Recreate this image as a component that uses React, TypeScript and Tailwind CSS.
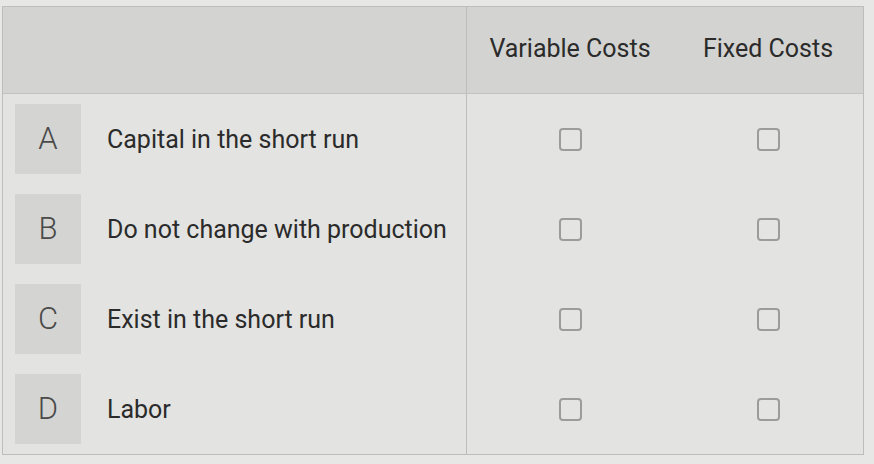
import React from "react";

const rows = [
  { letter: "A", label: "Capital in the short run" },
  { letter: "B", label: "Do not change with production" },
  { letter: "C", label: "Exist in the short run" },
  { letter: "D", label: "Labor" },
];

const Box: React.FC = () => (
  <div className="w-[23px] h-[23px] rounded-[4px] border-2 border-[#9c9c9a] bg-[#e4e4e2]" />
);

const App: React.FC = () => {
  return (
    <div
      className="w-[874px] h-[464px] bg-[#e7e7e5] pt-[6px] pl-[2px]"
      style={{ fontFamily: "Roboto, 'Liberation Sans', sans-serif" }}
    >
      <div className="w-[862px] h-[449px] border border-[#bdbdbb] bg-[#e3e3e1] flex flex-col">
        {/* header */}
        <div className="flex h-[87px] bg-[#d3d3d1] border-b border-[#c2c2c0]">
          <div className="w-[464px] border-r border-[#bdbdbb]" />
          <div className="w-[206px] flex items-center justify-center pb-[2px] text-[25px] text-[#2b2b2b]">
            Variable Costs
          </div>
          <div className="flex-1 flex items-center justify-center pb-[2px] text-[25px] text-[#2b2b2b]">
            Fixed Costs
          </div>
        </div>

        {/* body */}
        <div className="flex flex-1">
          <div className="w-[464px] border-r border-[#bdbdbb] flex flex-col">
            {rows.map((r) => (
              <div key={r.letter} className="h-[90px] flex items-center pl-[12px]">
                <div className="w-[66px] h-[70px] bg-[#d4d4d2] flex items-center justify-center text-[31px] font-light text-[#4a4a4a]">
                  {r.letter}
                </div>
                <span className="ml-[26px] pt-[2px] text-[25px] text-[#2b2b2b]">{r.label}</span>
              </div>
            ))}
          </div>
          <div className="w-[206px] flex flex-col">
            {rows.map((r) => (
              <div key={r.letter} className="h-[90px] flex items-center justify-center">
                <Box />
              </div>
            ))}
          </div>
          <div className="flex-1 flex flex-col">
            {rows.map((r) => (
              <div key={r.letter} className="h-[90px] flex items-center justify-center">
                <Box />
              </div>
            ))}
          </div>
        </div>
      </div>
    </div>
  );
};

export default App;
